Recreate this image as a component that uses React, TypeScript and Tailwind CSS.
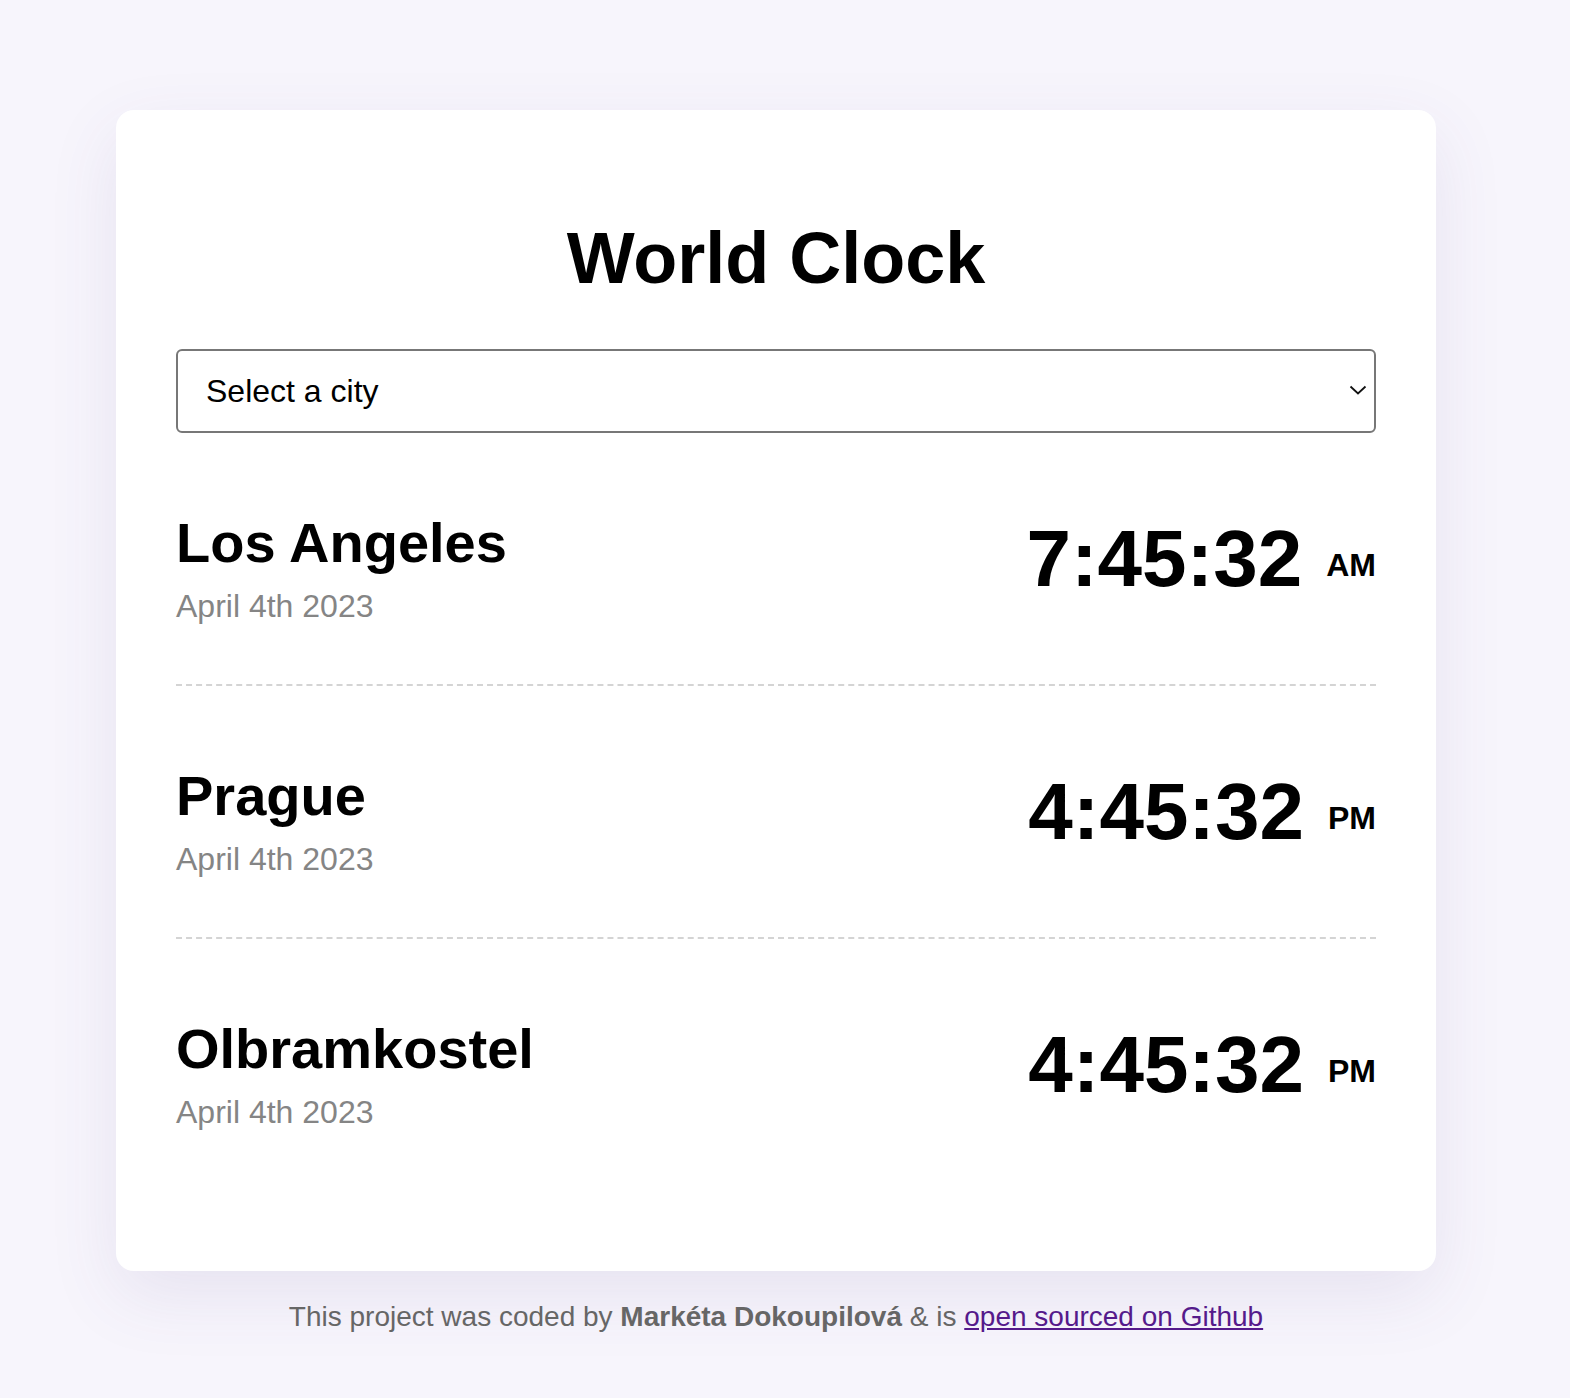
import React from "react";

type City = { name: string; date: string; time: string; ampm: string };

const cities: City[] = [
  { name: "Los Angeles", date: "April 4th 2023", time: "7:45:32", ampm: "AM" },
  { name: "Prague", date: "April 4th 2023", time: "4:45:32", ampm: "PM" },
  { name: "Olbramkostel", date: "April 4th 2023", time: "4:45:32", ampm: "PM" },
];

export default function App() {
  return (
    <div
      className="min-h-[1398px] w-full bg-[#f7f5fc] pt-[110px] pb-10"
      style={{ fontFamily: '"Liberation Sans", Arial, Helvetica, sans-serif' }}
    >
      <div className="ml-[116px] w-[1320px]">
        <div className="rounded-[18px] bg-white px-[60px] pt-[108px] pb-[81px] shadow-[0_24px_70px_rgba(90,70,140,0.10)]">
          <h1 className="text-center text-[72px] font-bold leading-[80px] text-black">
            World Clock
          </h1>
          <div className="relative mt-[51px]">
            <select
              className="h-[84px] w-full appearance-none rounded-[6px] border-2 border-[#777777] bg-white pl-[28px] text-[32px] text-black outline-none"
              style={{ fontFamily: '"Liberation Sans", Arial, Helvetica, sans-serif' }}
              defaultValue=""
            >
              <option value="">Select a city</option>
              <option value="tokyo">Tokyo</option>
              <option value="paris">Paris</option>
              <option value="sydney">Sydney</option>
            </select>
            <svg
              className="pointer-events-none absolute right-[9px] top-[35px]"
              width="18"
              height="12"
              viewBox="0 0 18 12"
              fill="none"
            >
              <path d="M1.5 2.5 L9 9.5 L16.5 2.5" stroke="#111" strokeWidth="1.8" />
            </svg>
          </div>
          <div>
            {cities.map((c, i) => (
              <div
                key={c.name}
                className={
                  "flex items-start justify-between pt-[78px] pb-[58px] " +
                  (i < cities.length - 1 ? "border-b-2 border-dashed border-[#d4d4d4]" : "")
                }
              >
                <div className="flex flex-col">
                  <div className="text-[56px] font-bold leading-[64px] text-black">{c.name}</div>
                  <div className="mt-[11px] text-[32px] leading-[40px] text-[#858585]">{c.date}</div>
                </div>
                <div className="mt-[8px] text-[80px] font-bold leading-[80px] text-black">
                  {c.time}
                  <span className="ml-[24px] align-[10px] text-[32px] leading-none">{c.ampm}</span>
                </div>
              </div>
            ))}
          </div>
        </div>
        <p className="mt-[30px] text-center text-[28px] leading-[32px] text-[#666666]">
          This project was coded by <strong className="font-bold">Markéta Dokoupilová</strong> &amp; is{" "}
          <a href="#" className="text-[#551a8b] underline">
            open sourced on Github
          </a>
        </p>
      </div>
    </div>
  );
}
